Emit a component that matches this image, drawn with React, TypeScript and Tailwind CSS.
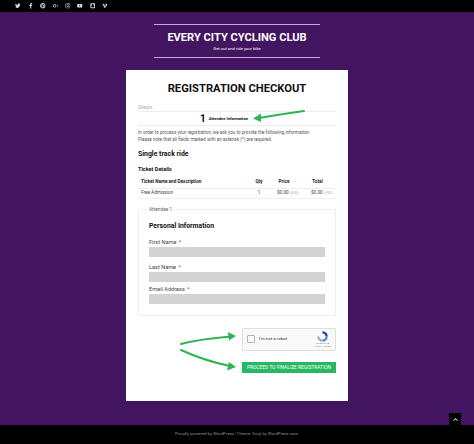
import React from 'react'
import { FaTwitter, FaFacebookF, FaPinterest, FaGooglePlusG, FaInstagram, FaYoutube, FaSnapchatSquare, FaVimeoV, FaChevronUp } from 'react-icons/fa'

const socials = [FaTwitter, FaFacebookF, FaPinterest, FaGooglePlusG, FaInstagram, FaYoutube, FaSnapchatSquare, FaVimeoV]

const fields = [
  { label: 'First Name', className: 'mt-[8px]' },
  { label: 'Last Name', className: 'mt-[7px]' },
  { label: 'Email Address', className: 'mt-[4px]' },
]

// green annotation arrows drawn over the form
const Arrow = ({ d, head }: { d: string; head: string }) => (
  <>
    <path d={d} fill="none" stroke="#2fb457" strokeWidth="2" strokeLinecap="round" />
    <polygon points={head} fill="#2fb457" />
  </>
)

export default function App() {
  return (
    <div className="relative h-[444px] w-[474px] overflow-hidden bg-[#43145f] font-['Roboto',sans-serif] text-[#333]">
      <div className="flex h-3 items-center gap-[8px] bg-black pl-[16px] text-[#d8d8d8]">
        {socials.map((Icon, i) => (
          <span key={i} className="flex w-[4.4px] justify-center">
            <Icon className="h-[5.5px] w-[5.5px] shrink-0" />
          </span>
        ))}
      </div>

      <header className="mx-auto mt-3 flex h-[34px] w-[166px] flex-col items-center border-y border-[#c9a6dc] text-white">
        <h1 className="mt-[4px] text-[11.1px] leading-[17px] font-bold whitespace-nowrap">EVERY CITY CYCLING CLUB</h1>
        <p className="text-[4.2px] leading-[6px]">Get out and ride your bike</p>
      </header>

      <main className="absolute top-[70px] left-[126px] h-[331px] w-[222px] bg-white px-3">
        <h2 className="mt-[10px] text-center text-[11.2px] leading-[18px] font-bold text-[#111]">REGISTRATION CHECKOUT</h2>

        <p className="mt-[5px] text-[5.6px] leading-[8px] font-bold text-[#c4c4c4]">Steps</p>
        <div className="flex h-[15px] items-center justify-center gap-[3px] border-y border-[#eeeeee] pr-[26px] text-[#111]">
          <span className="text-[10px] leading-none font-bold">1</span>
          <span className="mt-[2px] text-[4.1px] leading-none font-bold">Attendee Information</span>
        </div>

        <p className="mt-[3px] text-[4.6px] leading-[7px] whitespace-nowrap text-[#555]">
          In order to process your registration, we ask you to provide the following information.
          <br />
          Please note that all fields marked with an asterisk (*) are required.
        </p>

        <h3 className="mt-[5px] text-[6.9px] leading-[12px] font-bold text-[#111]">Single track ride</h3>
        <h4 className="mt-[5px] text-[5.5px] leading-[8px] font-bold text-[#111]">Ticket Details</h4>

        <table className="mt-[5px] w-full table-fixed text-[4.65px] text-[#444]">
          <colgroup>
            <col className="w-[111px]" />
            <col className="w-[20px]" />
            <col className="w-[30px]" />
            <col />
          </colgroup>
          <thead>
            <tr className="h-[10px] border-b border-[#eeeeee] font-bold text-[#222]">
              <th className="pl-[3px] text-left">Ticket Name and Description</th>
              <th className="text-center">Qty</th>
              <th className="text-center">Price</th>
              <th className="text-center">Total</th>
            </tr>
          </thead>
          <tbody>
            <tr className="h-[10px] border-b border-[#eeeeee]">
              <td className="pl-[3px]">Free Admission</td>
              <td className="text-center">1</td>
              <td className="pl-[8px] whitespace-nowrap">
                $0.00 <span className="text-[3.5px] text-[#aaa]">(USD)</span>
              </td>
              <td className="pl-[12px] whitespace-nowrap">
                $0.00 <span className="text-[3.5px] text-[#aaa]">(USD)</span>
              </td>
            </tr>
          </tbody>
        </table>

        <section className="relative mt-[10px] h-[107px] rounded-[2px] border border-[#eeeeee] px-[10px]">
          <span className="absolute top-[-4px] left-[7px] bg-white px-[3px] text-[4.8px] leading-[7px] text-[#666]">Attendee 1</span>
          <h4 className="mt-[11px] text-[6.85px] leading-[10px] font-bold text-[#111]">Personal Information</h4>
          {fields.map(f => (
            <div key={f.label} className={f.className}>
              <p className="text-[5.6px] leading-[7px] text-[#444]">
                {f.label} <span className="ml-px text-[#c0262d]">*</span>
              </p>
              <div className="mt-[1px] h-[10px] bg-[#d3d3d3]" />
            </div>
          ))}
        </section>

        <div className="mt-[12px] ml-auto flex h-[23px] w-[94px] items-center rounded-[1px] border border-[#e0e0e0] bg-[#f9f9f9] pl-[4px]">
          <span className="h-[8px] w-[8px] rounded-[1px] border border-[#b5b5b5] bg-white" />
          <span className="ml-[4px] text-[4.4px] text-[#333]">I'm not a robot</span>
          <span className="mr-[4px] ml-auto flex flex-col items-center">
            <svg viewBox="0 0 24 24" className="h-[11px] w-[11px]" fill="none" strokeWidth="5">
              <path d="M12 3a9 9 0 0 1 9 9" stroke="#1c3aa9" />
              <path d="M21 12a9 9 0 0 1-9 9" stroke="#4a90e2" />
              <path d="M12 21a9 9 0 0 1-9-9" stroke="#ababab" />
            </svg>
            <span className="text-[2.5px] leading-[3px] text-[#888]">reCAPTCHA</span>
            <span className="text-[2.5px] leading-[3px] text-[#888]">Privacy - Terms</span>
          </span>
        </div>

        <button className="mt-[11px] ml-auto block h-[11px] w-[94px] bg-[#26b864] text-center text-[4.85px] leading-[11px] whitespace-nowrap text-white">
          PROCEED TO FINALIZE REGISTRATION
        </button>
      </main>

      <svg className="pointer-events-none absolute inset-0 h-full w-full" viewBox="0 0 474 444">
        <Arrow d="M304 111 Q282 114 259 118" head="253,118.500 261,113.500 261,122" />
        <Arrow d="M181 344 Q200 339 231 336.500" head="236,336 228,332 229,340.500" />
        <Arrow d="M181 350 Q205 361 230 366" head="236,367 229,362 227,370.500" />
      </svg>

      <button className="absolute top-[413px] left-[449px] flex h-3 w-3 items-center justify-center bg-black text-white">
        <FaChevronUp className="h-[5px] w-[5px]" />
      </button>

      <footer className="absolute right-0 bottom-0 left-0 flex h-[19px] items-center bg-black pl-[175px] text-[4.25px] text-[#8a8a8a]">
        Proudly powered by WordPress | Theme: Singl by WordPress.com.
      </footer>
    </div>
  )
}
